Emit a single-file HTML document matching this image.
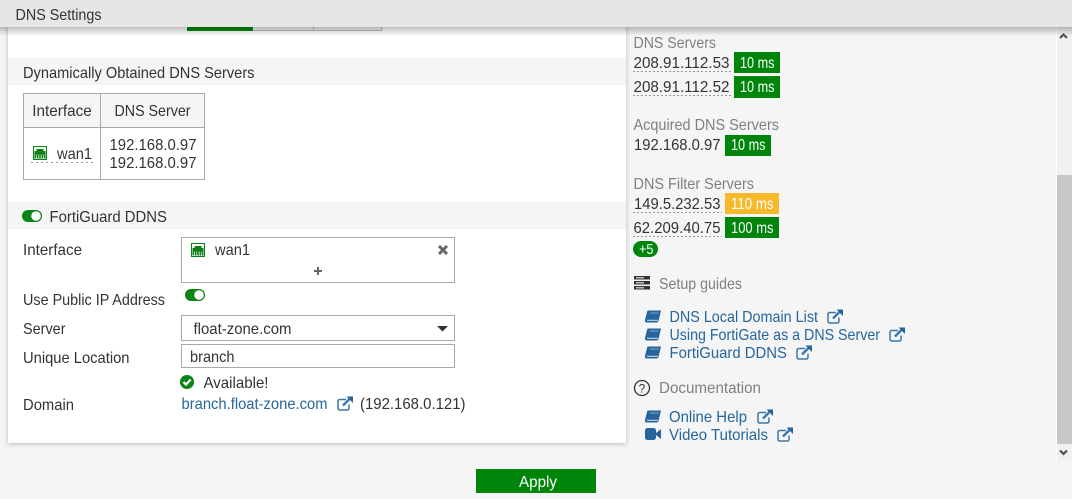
<!DOCTYPE html>
<html><head><meta charset="utf-8"><style>
html,body{margin:0;padding:0;width:1072px;height:499px;overflow:hidden;background:#f5f5f5}
svg{position:absolute;left:0;top:0;display:block}
text{font-family:"Liberation Sans",sans-serif;font-size:15.8px;fill:#333}
.g{fill:#808080}.b{fill:#26659c}.w{fill:#fff}
</style></head><body>
<svg width="1072" height="499" viewBox="0 0 1072 499" xmlns="http://www.w3.org/2000/svg">
<defs>
<linearGradient id="hs" x1="0" y1="0" x2="0" y2="1"><stop offset="0" stop-color="#000" stop-opacity=".25"/><stop offset="1" stop-color="#000" stop-opacity="0"/></linearGradient>
<filter id="sh" x="-5%" y="-5%" width="110%" height="110%"><feDropShadow dx="0" dy="1" stdDeviation="2.500" flood-color="#000" flood-opacity=".25"/></filter>
<g id="net"><rect x=".5" y=".5" width="13" height="13" fill="#fbfdf0" stroke="#0c7f16"/><path d="M1.500 12.500V5h2V3h7v2h2v7.500z" fill="#0c7f16"/><path d="M3.500 8.500v4M5.800 8.500v4M8.200 8.500v4M10.500 8.500v4" stroke="#a8d8ac" stroke-width="1"/></g>
<g id="ext" fill="none" stroke="#3c78ad"><path d="M9 3.500H3Q1 3.500 1 5.500V12Q1 14 3 14H10Q12 14 12 12V8.500" stroke-width="1.500"/><path d="M6 9.500L13 2.500" stroke-width="2.400"/><path d="M9.500 0.500H16V7z" fill="#26659c" stroke="none"/></g>
<g id="book"><path d="M3 0H16L13.500 10.500Q13 12 11.500 12H2Q-.5 12 0 9.500L2 1.500Q2.300 0 3 0z" fill="#26659c"/><path d="M2 9.800H13" stroke="#cfdfeb" stroke-width="1"/><path d="M5 2.500H13.500" stroke="#7ea6c8" stroke-width="1"/></g>
<g id="tog"><rect width="20" height="12" rx="6" fill="#0a8412"/><circle cx="14" cy="6" r="4.800" fill="#fff"/></g>
</defs>

<!-- left card -->
<rect x="8" y="20" width="618" height="423" fill="#fff" filter="url(#sh)"/>
<rect x="8" y="58" width="618" height="27" fill="#f5f5f5"/>
<rect x="8" y="202" width="618" height="27" fill="#f5f5f5"/>

<!-- tabs -->
<rect x="253" y="27" width="129" height="3.500" fill="#f5f5f5"/>
<path d="M253 30.500H381.500V27M313.500 27V30.500" fill="none" stroke="#c0c0c0"/>
<rect x="187" y="27" width="66" height="4" fill="#008a0e"/>

<text x="23" y="78" textLength="231.500" lengthAdjust="spacingAndGlyphs">Dynamically Obtained DNS Servers</text>

<!-- table -->
<rect x="23.500" y="93.500" width="181" height="86" fill="#fff" stroke="#a9a9a9"/>
<rect x="24" y="94" width="180" height="33" fill="#f5f5f5"/>
<path d="M23.500 127.500H204.500M100.500 93.500V179.500" stroke="#a9a9a9" fill="none"/>
<text x="32.300" y="116" textLength="59.500" lengthAdjust="spacingAndGlyphs">Interface</text>
<text x="114.500" y="116" textLength="76" lengthAdjust="spacingAndGlyphs">DNS Server</text>
<use href="#net" x="33" y="146"/>
<text x="57" y="159" textLength="35" lengthAdjust="spacingAndGlyphs">wan1</text>
<path d="M31 162.500H93" stroke="#999" stroke-dasharray="2 3"/>
<text x="109.500" y="150" textLength="87" lengthAdjust="spacingAndGlyphs">192.168.0.97</text>
<text x="109.500" y="168" textLength="87" lengthAdjust="spacingAndGlyphs">192.168.0.97</text>

<!-- DDNS -->
<use href="#tog" x="22" y="210"/>
<text x="49.500" y="222" textLength="117.500" lengthAdjust="spacingAndGlyphs">FortiGuard DDNS</text>
<text x="23" y="255" textLength="59" lengthAdjust="spacingAndGlyphs">Interface</text>
<rect x="181.500" y="237.500" width="273" height="45" fill="#fff" stroke="#a9a9a9"/>
<use href="#net" x="191" y="243"/>
<text x="215" y="255" textLength="35" lengthAdjust="spacingAndGlyphs">wan1</text>
<path d="M439 246L447 254M447 246L439 254" stroke="#666" stroke-width="3"/>
<path d="M314 271H322M318 267V275" stroke="#666" stroke-width="2"/>
<text x="23" y="305" textLength="142" lengthAdjust="spacingAndGlyphs">Use Public IP Address</text>
<use href="#tog" x="185" y="289"/>
<text x="23" y="334" textLength="42.500" lengthAdjust="spacingAndGlyphs">Server</text>
<rect x="181.500" y="315.500" width="273" height="25" fill="#fff" stroke="#a9a9a9"/>
<text x="193.500" y="334" textLength="98" lengthAdjust="spacingAndGlyphs">float-zone.com</text>
<path d="M437 326H448L442.500 331.500z" fill="#333"/>
<text x="23" y="363" textLength="106.500" lengthAdjust="spacingAndGlyphs">Unique Location</text>
<rect x="181.500" y="344.500" width="273" height="23" fill="#fff" stroke="#a9a9a9"/>
<text x="190" y="362" textLength="44.500" lengthAdjust="spacingAndGlyphs">branch</text>
<circle cx="187" cy="382" r="7" fill="#0a8412"/>
<path d="M183.500 382L186 384.500L190.700 379.500" fill="none" stroke="#fff" stroke-width="2.200"/>
<text x="203.500" y="388" textLength="65" lengthAdjust="spacingAndGlyphs">Available!</text>
<text x="23" y="410" textLength="51" lengthAdjust="spacingAndGlyphs">Domain</text>
<text class="b" x="181.500" y="409" textLength="146" lengthAdjust="spacingAndGlyphs">branch.float-zone.com</text>
<use href="#ext" x="337" y="396"/>
<text x="360" y="409" textLength="105.500" lengthAdjust="spacingAndGlyphs">(192.168.0.121)</text>

<!-- right column -->
<text class="g" x="633.500" y="48" textLength="82.500" lengthAdjust="spacingAndGlyphs">DNS Servers</text>
<text x="633.500" y="68" textLength="96" lengthAdjust="spacingAndGlyphs">208.91.112.53</text>
<path d="M633 71.500H731" stroke="#999" stroke-dasharray="2 2"/>
<rect x="734" y="52" width="46" height="21" fill="#00850b"/>
<text class="w" x="740" y="68" textLength="34.500" lengthAdjust="spacingAndGlyphs">10 ms</text>
<text x="633.500" y="92" textLength="96" lengthAdjust="spacingAndGlyphs">208.91.112.52</text>
<path d="M633 95.500H731" stroke="#999" stroke-dasharray="2 2"/>
<rect x="734" y="76" width="46" height="22" fill="#00850b"/>
<text class="w" x="740" y="92" textLength="34.500" lengthAdjust="spacingAndGlyphs">10 ms</text>

<text class="g" x="633.500" y="130" textLength="145.500" lengthAdjust="spacingAndGlyphs">Acquired DNS Servers</text>
<text x="634" y="150" textLength="86.500" lengthAdjust="spacingAndGlyphs">192.168.0.97</text>
<rect x="725" y="135" width="46" height="21" fill="#00850b"/>
<text class="w" x="731" y="150" textLength="34.500" lengthAdjust="spacingAndGlyphs">10 ms</text>

<text class="g" x="633.500" y="189" textLength="120.500" lengthAdjust="spacingAndGlyphs">DNS Filter Servers</text>
<text x="634" y="209" textLength="86.500" lengthAdjust="spacingAndGlyphs">149.5.232.53</text>
<path d="M633 212.500H722" stroke="#999" stroke-dasharray="2 2"/>
<rect x="725" y="193" width="54" height="21" fill="#f6b92b"/>
<text class="w" x="731" y="209" textLength="42.500" lengthAdjust="spacingAndGlyphs">110 ms</text>
<text x="633.500" y="233" textLength="87" lengthAdjust="spacingAndGlyphs">62.209.40.75</text>
<path d="M633 236.500H722" stroke="#999" stroke-dasharray="2 2"/>
<rect x="725" y="217" width="54" height="21" fill="#00850b"/>
<text class="w" x="731" y="233" textLength="42.500" lengthAdjust="spacingAndGlyphs">100 ms</text>
<rect x="633" y="241" width="25" height="16" rx="8" fill="#00850b"/>
<text class="w" x="639" y="254" textLength="14.500" lengthAdjust="spacingAndGlyphs" style="font-size:14.500px">+5</text>

<!-- setup guides -->
<g fill="#333"><rect x="634" y="276" width="16" height="3.500"/><rect x="634" y="281" width="16" height="3.500"/><rect x="634" y="286" width="16" height="3.500"/></g>
<g fill="#bbb"><rect x="636" y="277" width="8" height="1.500"/><rect x="636" y="282" width="8" height="1.500"/><rect x="636" y="287" width="8" height="1.500"/></g>
<text class="g" x="659" y="289" textLength="83" lengthAdjust="spacingAndGlyphs">Setup guides</text>
<use href="#book" x="645" y="310.500"/>
<text class="b" x="669.500" y="322" textLength="148.500" lengthAdjust="spacingAndGlyphs">DNS Local Domain List</text>
<use href="#ext" x="827" y="309"/>
<use href="#book" x="645" y="328.500"/>
<text class="b" x="669.500" y="340" textLength="210.500" lengthAdjust="spacingAndGlyphs">Using FortiGate as a DNS Server</text>
<use href="#ext" x="889" y="327"/>
<use href="#book" x="645" y="346.500"/>
<text class="b" x="669.500" y="358" textLength="117.500" lengthAdjust="spacingAndGlyphs">FortiGuard DDNS</text>
<use href="#ext" x="796" y="345"/>

<!-- documentation -->
<circle cx="642" cy="388" r="7.500" fill="none" stroke="#333" stroke-width="1.300"/>
<text x="642" y="392.500" text-anchor="middle" style="font-size:12px">?</text>
<text class="g" x="659" y="393" textLength="102" lengthAdjust="spacingAndGlyphs">Documentation</text>
<use href="#book" x="645" y="410.500"/>
<text class="b" x="669" y="422" textLength="78" lengthAdjust="spacingAndGlyphs">Online Help</text>
<use href="#ext" x="757" y="409"/>
<rect x="645" y="428" width="11" height="12" rx="2.500" fill="#26659c"/>
<path d="M656 433L661 429V439L656 435z" fill="#26659c"/>
<text class="b" x="669" y="440" textLength="99" lengthAdjust="spacingAndGlyphs">Video Tutorials</text>
<use href="#ext" x="777" y="427"/>

<!-- scrollbar -->
<rect x="1056" y="27" width="16" height="434" fill="#f1f1f1"/>
<rect x="1056" y="27" width="1" height="434" fill="#fff"/>
<rect x="1057" y="175" width="15" height="269" fill="#c8c8c8"/>
<path d="M1060 38L1063.500 34.500L1067 38" fill="none" stroke="#505050" stroke-width="2.200"/>
<path d="M1060 450.500L1063.500 454L1067 450.500" fill="none" stroke="#505050" stroke-width="2.200"/>

<!-- header -->
<rect x="0" y="27" width="1072" height="9" fill="url(#hs)"/>
<rect x="0" y="0" width="1072" height="27" fill="#e6e6e6"/>
<text x="15.500" y="20" textLength="86" lengthAdjust="spacingAndGlyphs">DNS Settings</text>

<!-- apply -->
<rect x="476" y="469" width="120" height="24" fill="#00850b"/>
<text class="w" x="519" y="487" textLength="38" lengthAdjust="spacingAndGlyphs">Apply</text>
</svg>
</body></html>
